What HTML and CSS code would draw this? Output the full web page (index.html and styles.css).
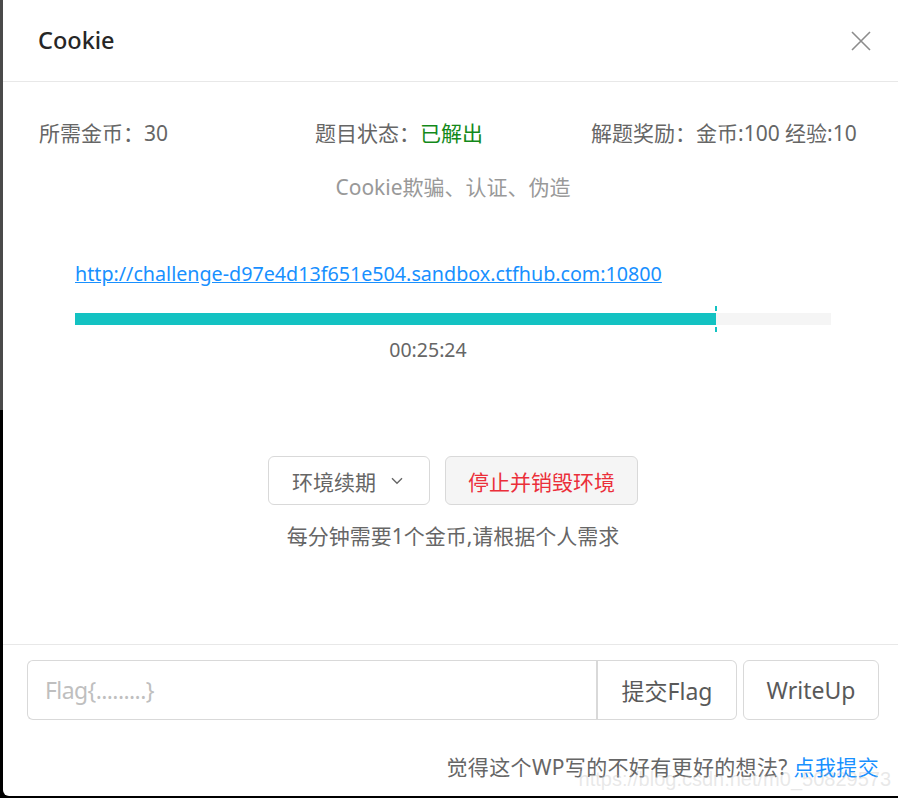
FILE: index.html
```html
<!DOCTYPE html>
<html lang="zh-CN">
<head>
<meta charset="utf-8">
<title>Cookie</title>
<link rel="stylesheet" href="styles.css">
</head>
<body>
<div class="modal">
  <div class="modal-header">
    <div class="modal-title">Cookie</div>
    <button class="modal-close" aria-label="关闭">
      <svg width="20" height="20" viewBox="0 0 20 20"><path d="M1 1 L19 19 M19 1 L1 19" stroke="#8c8c8c" stroke-width="1.6" fill="none"/></svg>
    </button>
  </div>
  <div class="modal-body">
    <div class="stats">
      <div>所需金币：30</div>
      <div>题目状态：<span class="solved">已解出</span></div>
      <div>解题奖励：金币:100 经验:10</div>
    </div>
    <div class="desc">Cookie欺骗、认证、伪造</div>
    <div class="env">
      <a class="env-link" href="#">http://challenge-d97e4d13f651e504.sandbox.ctfhub.com:10800</a>
      <div class="progress">
        <div class="progress-fill" style="width: 84.8%"></div>
        <span class="progress-mark" style="left: 84.8%"></span>
      </div>
      <div class="timer">00:25:24</div>
    </div>
    <div class="actions">
      <button class="btn btn-renew">环境续期<svg class="chev" width="12" height="8" viewBox="0 0 12 8"><path d="M1 1.2 L6 6.2 L11 1.2" stroke="#666" stroke-width="1.4" fill="none"/></svg></button>
      <button class="btn btn-stop">停止并销毁环境</button>
    </div>
    <div class="note">每分钟需要1个金币,请根据个人需求</div>
  </div>
  <div class="modal-footer">
    <div class="flag-row">
      <div class="input-group">
        <input class="flag-input" type="text" placeholder="Flag{.........}">
        <button class="btn-addon">提交Flag</button>
      </div>
      <button class="btn btn-wp">WriteUp</button>
    </div>
    <div class="feedback">觉得这个WP写的不好有更好的想法? <a href="#" class="feedback-link">点我提交</a></div>
  </div>
  <div class="watermark">https://blog.csdn.net/m0_50829573</div>
</div>
</body>
</html>
```

FILE: styles.css
```css
html, body {
  margin: 0;
  padding: 0;
  width: 898px;
  height: 798px;
  overflow: hidden;
}
body {
  background: linear-gradient(to bottom, #4a4a4a 0, #4a4a4a 410px, #000 410px, #000 100%);
  font-family: "Noto Sans", "Noto Sans CJK SC", sans-serif;
  color: #666;
}
.modal {
  position: relative;
  margin-left: 3px;
  width: 900px;
  height: 796px;
  background: #fff;
  border-radius: 0 0 6px 6px;
  display: flex;
  flex-direction: column;
}
.modal-header {
  position: relative;
  height: 81px;
  border-bottom: 1px solid #e8e8e8;
  padding: 0 35px;
  display: flex;
  align-items: center;
}
.modal-title {
  font-size: 23.5px;
  font-weight: 500;
  color: #262626;
  line-height: 33px;
}
.modal-close {
  position: absolute;
  right: 0;
  top: 0;
  width: 84px;
  height: 81px;
  border: 0;
  background: transparent;
  padding: 0;
  display: flex;
  align-items: center;
  justify-content: center;
}
.modal-body {
  flex: 1;
  padding: 36px 36px 0;
  font-size: 21px;
  line-height: 31px;
}
.stats {
  display: grid;
  grid-template-columns: 1fr 1fr 1fr;
  color: #666;
}
.solved { color: #13891a; }
.desc {
  margin-top: 23px;
  text-align: center;
  color: #999;
}
.env {
  margin-top: 55px;
  padding: 0 36px;
}
.env-link {
  color: #1890ff;
  text-decoration: underline;
  display: inline-block;
  font-size: 19.7px;
}
.progress {
  position: relative;
  margin-top: 24px;
  height: 12px;
  background: #f5f5f5;
}
.progress-fill {
  height: 100%;
  background: #13c2c2;
}
.progress-mark {
  position: absolute;
  top: -7px;
  width: 2px;
  height: 26px;
  margin-left: -1px;
  background: linear-gradient(to bottom, #13c2c2 0, #13c2c2 5px, transparent 5px, transparent 21px, #13c2c2 21px);
}
.timer {
  margin-top: 9px;
  padding-right: 50px;
  text-align: center;
  color: #666;
  font-size: 19.5px;
}
.actions {
  margin-top: 91px;
  display: flex;
  justify-content: center;
  gap: 15px;
}
.btn {
  box-sizing: border-box;
  height: 49px;
  font-family: inherit;
  font-size: 21px;
  border: 1px solid #d9d9d9;
  border-radius: 6px;
  padding: 0 22px;
  background: #fff;
  color: #666;
  display: inline-flex;
  align-items: center;
}
.btn-renew { padding: 0 26px 0 23px; }
.chev { margin-left: 15px; }
.btn-stop {
  background: #f5f5f5;
  color: #eb2f3a;
}
.note {
  margin-top: 16px;
  text-align: center;
  color: #666;
}
.modal-footer {
  border-top: 1px solid #e8e8e8;
  padding: 15px 24px 0;
  height: 136px;
}
.flag-row {
  display: flex;
  gap: 6px;
}
.input-group {
  flex: 1;
  display: flex;
  height: 60px;
}
.flag-input {
  flex: 1;
  min-width: 0;
  box-sizing: border-box;
  height: 60px;
  border: 1px solid #d9d9d9;
  border-right: 0;
  border-radius: 6px 0 0 6px;
  padding: 0 17px;
  font-family: inherit;
  font-size: 23px;
  letter-spacing: -0.6px;
  color: #666;
  outline: none;
}
.flag-input::placeholder { color: #bfbfbf; }
.btn-addon {
  box-sizing: border-box;
  width: 141px;
  height: 60px;
  border: 1px solid #d9d9d9;
  border-left: 2px solid #d9d9d9;
  border-radius: 0 6px 6px 0;
  background: #fff;
  font-family: inherit;
  font-size: 23px;
  color: #595959;
}
.btn-wp {
  height: 60px;
  width: 136px;
  justify-content: center;
  padding: 0;
  font-size: 23px;
  color: #595959;
}
.feedback {
  margin-top: 32px;
  text-align: right;
  font-size: 21px;
  line-height: 31px;
  letter-spacing: 0.35px;
  color: #666;
}
.feedback-link {
  color: #1890ff;
  text-decoration: none;
}
.watermark {
  position: absolute;
  right: 12px;
  bottom: 5px;
  font-size: 20px;
  color: rgba(190, 190, 190, 0.35);
  font-family: "Liberation Sans", sans-serif;
  pointer-events: none;
}
```
